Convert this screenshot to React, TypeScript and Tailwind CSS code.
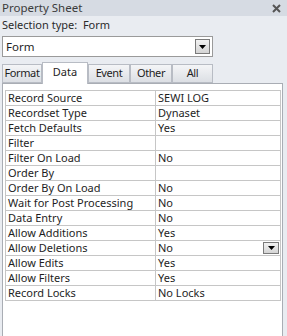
import React from "react";

const rows: [string, string][] = [
  ["Record Source", "SEWI LOG"],
  ["Recordset Type", "Dynaset"],
  ["Fetch Defaults", "Yes"],
  ["Filter", ""],
  ["Filter On Load", "No"],
  ["Order By", ""],
  ["Order By On Load", "No"],
  ["Wait for Post Processing", "No"],
  ["Data Entry", "No"],
  ["Allow Additions", "Yes"],
  ["Allow Deletions", "No"],
  ["Allow Edits", "Yes"],
  ["Allow Filters", "Yes"],
  ["Record Locks", "No Locks"],
];

function Arrow() {
  return (
    <svg width="7" height="4" viewBox="0 0 7 4">
      <path d="M0 0 H7 L3.5 4 Z" fill="#000" />
    </svg>
  );
}

function DropBtn({ cls }: { cls: string }) {
  return (
    <div
      className={`${cls} flex items-center justify-center border border-[#7a7a7a] bg-gradient-to-b from-[#f2f2f2] to-[#d4d4d4]`}
    >
      <Arrow />
    </div>
  );
}

const tabs = ["Format", "Data", "Event", "Other", "All"];
const tabW = ["w-[40px]", "w-[46px]", "w-[42px]", "w-[42px]", "w-[41px]"];

export default function App() {
  return (
    <div
      className="w-[287px] h-[336px] bg-[#e9ecf1] flex flex-col overflow-hidden text-[#1e1e1e]"
      style={{ fontFamily: '"Noto Sans", "Open Sans", sans-serif' }}
    >
      <div className="h-[16px] bg-[#d6dbe3] flex items-center justify-between pl-[2px] pr-[6px] text-[11.5px] text-[#3b3b3b]">
        <span>Property Sheet</span>
        <svg width="9" height="9" viewBox="0 0 9 9">
          <path d="M1 1 L8 8 M8 1 L1 8" stroke="#555" strokeWidth="2" />
        </svg>
      </div>
      <div className="h-[19px] pl-[2px] flex items-center text-[11px] text-[#2b2b2b]">
        Selection type:&nbsp; Form
      </div>
      <div className="ml-[2px] mt-[1px] w-[211px] h-[21px] bg-white border border-[#9a9a9a] flex items-center justify-between pl-[3px] pr-[2px] text-[11.5px]">
        <span>Form</span>
        <DropBtn cls="w-[15px] h-[15px]" />
      </div>
      <div className="ml-[2px] mt-[5px] flex items-end h-[21px]">
        {tabs.map((t, i) => (
          <div
            key={t}
            className={
              i === 1
                ? `${tabW[i]} h-[22px] bg-white border border-b-0 border-[#b8bcc4] flex items-start justify-center pt-[1px] text-[11px] relative z-10 -mb-[1px]`
                : `${tabW[i]} h-[19px] bg-gradient-to-b from-[#f4f5f7] to-[#dcdfe4] border border-[#b8bcc4] flex items-center justify-center text-[11px] tracking-[-0.4px] whitespace-nowrap overflow-visible`
            }
          >
            {t}
          </div>
        ))}
      </div>
      <div className="ml-[2px] w-[281px] flex-1 bg-white border border-[#a9adb4] border-b-0 pt-[6px] pl-[2px]">
        <div className="w-[276px] border border-[#c6c6c6] border-b-0">
          {rows.map(([k, v]) => (
            <div key={k} className="flex h-[15px] border-b border-[#c6c6c6] text-[11px] leading-[14px]">
              <div className="w-[150px] border-r border-[#c6c6c6] pl-[2px] whitespace-nowrap overflow-hidden">
                {k}
              </div>
              <div className="flex-1 pl-[2px] flex justify-between items-start whitespace-nowrap">
                <span>{v}</span>
                {k === "Allow Deletions" && <DropBtn cls="w-[16px] h-[12px] mt-[1px] mr-[1px]" />}
              </div>
            </div>
          ))}
        </div>
      </div>
    </div>
  );
}
